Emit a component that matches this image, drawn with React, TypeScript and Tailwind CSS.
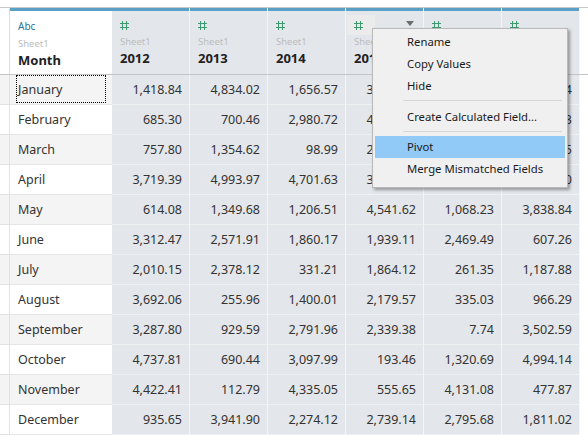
import React from 'react'

const years = ['2012', '2013', '2014', '2015', '2016', '2017']

const rows: [string, string[]][] = [
  ['January', ['1,418.84', '4,834.02', '1,656.57', '3,250.44', '2,108.77', '1,402.54']],
  ['February', ['685.30', '700.46', '2,980.72', '4,106.28', '3,512.90', '2,711.03']],
  ['March', ['757.80', '1,354.62', '98.99', '2,457.13', '881.40', '4,016.85']],
  ['April', ['3,719.39', '4,993.97', '4,701.63', '3,812.47', '1,553.06', '2,902.70']],
  ['May', ['614.08', '1,349.68', '1,206.51', '4,541.62', '1,068.23', '3,838.84']],
  ['June', ['3,312.47', '2,571.91', '1,860.17', '1,939.11', '2,469.49', '607.26']],
  ['July', ['2,010.15', '2,378.12', '331.21', '1,864.12', '261.35', '1,187.88']],
  ['August', ['3,692.06', '255.96', '1,400.01', '2,179.57', '335.03', '966.29']],
  ['September', ['3,287.80', '929.59', '2,791.96', '2,339.38', '7.74', '3,502.59']],
  ['October', ['4,737.81', '690.44', '3,097.99', '193.46', '1,320.69', '4,994.14']],
  ['November', ['4,422.41', '112.79', '4,335.05', '555.65', '4,131.08', '477.87']],
  ['December', ['935.65', '3,941.90', '2,274.12', '2,739.14', '2,795.68', '1,811.02']],
]

function NumberIcon() {
  return (
    <svg width="9" height="9" viewBox="0 0 9 9" className="block">
      <g stroke="#3d9a6f" strokeWidth="1" shapeRendering="crispEdges">
        <line x1="2.5" y1="0" x2="2.5" y2="9" />
        <line x1="6.5" y1="0" x2="6.5" y2="9" />
        <line x1="0" y1="2.5" x2="9" y2="2.5" />
        <line x1="0" y1="6.5" x2="9" y2="6.5" />
      </g>
    </svg>
  )
}

function ContextMenu() {
  const item = 'h-[22px] pl-[32px] flex items-center text-[11.3px] text-[#1a1a1a]'
  return (
    <div
      className="absolute left-[372px] top-[28px] w-[196px] h-[160px] bg-[#f0f0f0] border border-[#b9b9b9] pt-[2px] px-[2px]"
      style={{ boxShadow: '2px 2px 3px rgba(0,0,0,0.35)', fontFamily: '"Noto Sans", "Open Sans", sans-serif' }}
    >
      <div className={item}>Rename</div>
      <div className={item}>Copy Values</div>
      <div className={item}>Hide</div>
      <div className="h-[9px] pt-[3px] pl-[28px] pr-[3px]">
        <div className="h-px bg-[#d6d6d6]" />
      </div>
      <div className={item}>Create Calculated Field...</div>
      <div className="h-[8px] pt-[3px] pl-[28px] pr-[3px]">
        <div className="h-px bg-[#d6d6d6]" />
      </div>
      <div className={`${item} bg-[#91c9f7]`}>Pivot</div>
      <div className={item}>Merge Mismatched Fields</div>
    </div>
  )
}

export default function App() {
  return (
    <div
      className="w-[588px] h-[441px] bg-white relative overflow-hidden text-[#333]"
      style={{ fontFamily: '"Noto Sans", "Open Sans", sans-serif' }}
    >
      <div className="h-[7px]" />

      {/* Header */}
      <div className="border-t border-b border-t-[#c9c9c9] border-b-[#c4c4c4] flex h-[68px]">
        <div className="w-[10px] border-r border-[#dedede]" />
        <div className="w-[102px] flex flex-col">
          <div className="h-[3px] bg-[#5a9fc8]" />
          <div className="pl-[8px] pt-[9px] flex flex-col">
            <span className="h-[12px] leading-[12px] text-[10px] text-[#2f6f98]">Abc</span>
            <span className="mt-[6px] h-[12px] leading-[12px] text-[9.5px] text-[#bdbdbd]">Sheet1</span>
            <span className="mt-[2px] h-[16px] leading-[16px] text-[13px] font-bold text-[#222]">Month</span>
          </div>
        </div>
        {years.map((y, i) => (
          <div key={y} className="w-[78px] flex flex-col bg-[#e3e6ea] border-r border-[#f4f5f7] relative">
            <div className="h-[3px] bg-[#5a9fc8]" />
            {i === 3 && <div className="absolute left-[1px] top-[7px] w-[28px] h-[20px] bg-[#ebebeb]" />}
            {i === 3 && (
              <div className="absolute left-[60px] top-[13px] w-0 h-0 border-l-[4px] border-r-[4px] border-t-[5px] border-l-transparent border-r-transparent border-t-[#6d6d6d]" />
            )}
            <div className="pl-[8px] pt-[10px] flex flex-col relative">
              <NumberIcon />
              <span className="mt-[6px] h-[12px] leading-[12px] text-[9.5px] text-[#bdbdbd]">Sheet1</span>
              <span className="mt-[2px] h-[16px] leading-[16px] text-[13px] font-bold text-[#222]">{y}</span>
            </div>
          </div>
        ))}
      </div>

      {/* Rows */}
      {rows.map(([month, vals], r) => {
        const odd = r % 2 === 0
        return (
          <div key={month} className="flex h-[30px]">
            <div className={`w-[10px] border-r border-b border-[#e2e2e2] ${odd ? 'bg-[#f4f4f4]' : 'bg-white'}`} />
            <div className={`w-[102px] border-b border-[#e6e6e6] flex items-center ${odd ? 'bg-[#f4f4f4]' : 'bg-white'}`}>
              {r === 0 ? (
                <div className="ml-[6px] w-[90px] h-[28px] -mt-[1px] border border-dotted border-black flex items-center pl-[1px] pt-[2px] text-[12.5px]">
                  {month}
                </div>
              ) : (
                <span className="pl-[8px] pt-[2px] text-[12.5px]">{month}</span>
              )}
            </div>
            {vals.map((v, i) => (
              <div
                key={i}
                className="w-[78px] bg-[#e3e6ea] border-r border-b border-r-[#f4f5f7] border-b-[#eef0f2] flex items-center justify-end pr-[7px] pt-[2px] text-[12.5px]"
              >
                {v}
              </div>
            ))}
          </div>
        )
      })}

      <ContextMenu />
    </div>
  )
}
